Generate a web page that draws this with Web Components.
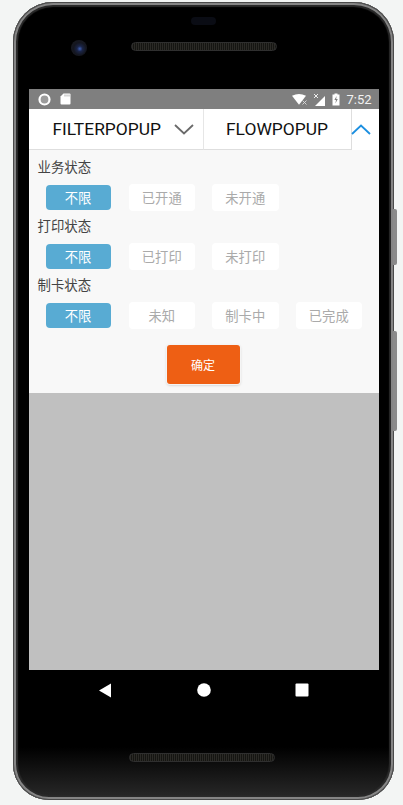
<!DOCTYPE html>
<html lang="zh">
<head>
<meta charset="utf-8">
<title>Popup demo</title>
<style>
  html, body { margin: 0; padding: 0; }
  body {
    width: 403px;
    height: 805px;
    overflow: hidden;
    background: #f3f5f4;
    font-family: Roboto, "Noto Sans CJK SC", sans-serif;
  }
</style>
</head>
<body>
<phone-frame>
  <status-bar></status-bar>
  <tab-bar></tab-bar>
  <filter-panel>
    <filter-group label="业务状态" options="已开通,未开通"></filter-group>
    <filter-group label="打印状态" options="已打印,未打印"></filter-group>
    <filter-group label="制卡状态" options="未知,制卡中,已完成"></filter-group>
    <confirm-button>确定</confirm-button>
  </filter-panel>
</phone-frame>

<script>
class PhoneFrame extends HTMLElement {
  constructor() {
    super();
    this.attachShadow({ mode: "open" });
  }

  connectedCallback() {
    this.shadowRoot.innerHTML = `
      <style>
        :host, * { box-sizing: border-box; }
        :host {
          display: block;
          position: relative;
          width: 381px;
          height: 798px;
          margin: 2px 0 0 13px;
        }
        .body {
          position: relative;
          width: 100%;
          height: 100%;
          padding-top: 87px;
          display: flex;
          flex-direction: column;
          align-items: center;
          background: linear-gradient(180deg, #000 0, #000 745px, #1c1c1c 780px, #2a2a2a 100%);
          border-radius: 40px 40px 36px 36px;
          box-shadow: inset 0 0 0 1px #4a4a4a, inset 0 0 0 3px #858585, inset 0 0 1px 5px #2a2a2a;
        }
        .screen {
          width: 350px;
          height: 581px;
          display: flex;
          flex-direction: column;
          background: #c0c0c0;
        }
        .nav {
          width: 350px;
          height: 40px;
          display: flex;
          align-items: center;
          justify-content: center;
        }
        .nav span { width: 98px; display: flex; justify-content: center; }
        .earpiece {
          position: absolute;
          left: 50%;
          top: 15px;
          width: 25px;
          height: 8px;
          margin-left: -12.5px;
          border-radius: 4px;
          background: #0a0c14;
        }
        .lens {
          position: absolute;
          left: 58px;
          top: 38px;
          width: 16px;
          height: 16px;
          border-radius: 50%;
          background: radial-gradient(circle at 55% 55%, #3f5fb5 0, #1b2547 22%, #14161f 50%, #1c1d22 100%);
        }
        .speaker {
          position: absolute;
          height: 9px;
          width: 146px;
          border-radius: 5px;
          background: repeating-linear-gradient(90deg, #2b2a26 0 1px, #151512 1px 2px);
          border: 1px solid #2f2f2f;
        }
        .speaker.top { left: 118px; top: 40px; }
        .speaker.bottom { left: 116px; top: 751px; }
        .key {
          position: absolute;
          right: -3px;
          width: 4px;
          background: #8a8a8a;
          border-radius: 0 2px 2px 0;
        }
        .key.power { top: 207px; height: 56px; }
        .key.volume { top: 329px; height: 100px; }
      </style>
      <div class="body">
        <div class="earpiece"></div>
        <div class="lens"></div>
        <div class="speaker top"></div>
        <div class="screen"><slot></slot></div>
        <div class="nav">
          <span><svg width="14" height="15" viewBox="0 0 14 15"><path d="M12 0.5V14.5L0 7.5Z" fill="#fff"/></svg></span>
          <span><svg width="14" height="14" viewBox="0 0 14 14"><circle cx="7" cy="7" r="6.8" fill="#fff"/></svg></span>
          <span><svg width="14" height="14" viewBox="0 0 14 14"><rect x="0.5" y="0.5" width="13" height="13" rx="1" fill="#fff"/></svg></span>
        </div>
        <div class="speaker bottom"></div>
        <div class="key power"></div>
        <div class="key volume"></div>
      </div>
    `;
  }
}

class StatusBar extends HTMLElement {
  constructor() {
    super();
    this.attachShadow({ mode: "open" });
  }

  connectedCallback() {
    this.shadowRoot.innerHTML = `
      <style>
        :host {
          display: flex;
          align-items: center;
          flex: none;
          height: 20px;
          padding: 0 7px 0 9px;
          background: #7f7f7f;
          color: #f2f2f2;
          font: 13px Roboto, sans-serif;
        }
        .left { display: flex; align-items: center; gap: 9px; margin-right: auto; }
        .right { display: flex; align-items: center; }
        svg { display: block; }
      </style>
      <div class="left">
        <svg width="13" height="13" viewBox="0 0 13 13"><circle cx="6.5" cy="6.5" r="5" fill="#9c9c9c" stroke="#fff" stroke-width="2.2"/></svg>
        <svg width="11" height="12" viewBox="0 0 11 12"><path d="M3.5 0.5H9.5Q10.5 0.5 10.5 1.5V10.5Q10.5 11.5 9.5 11.5H1.5Q0.5 11.5 0.5 10.5V3.5Z" fill="#fff"/><path d="M5 1.5V3.5M7 1.5V3.5M9 1.5V3.5" stroke="#999" stroke-width="0.8"/></svg>
      </div>
      <div class="right">
        <svg width="14" height="11" viewBox="0 0 14 11"><path d="M0 1.8Q7 -1.6 14 1.8L7 10.8Z" fill="#fff"/></svg>
        <svg width="5" height="5" viewBox="0 0 5 5" style="margin:6px 5px 0 -4px"><path d="M0.5 0.5L4.5 4.5M4.5 0.5L0.5 4.5" stroke="#ddd" stroke-width="0.9"/></svg>
        <svg width="14" height="13" viewBox="0 0 14 13" style="margin-right:6px"><path d="M13 3V13H3Z" fill="#fff"/><path d="M2 1L6 5M6 1L2 5" stroke="#eee" stroke-width="1"/></svg>
        <svg width="8" height="13" viewBox="0 0 8 13" style="margin-right:6px"><path d="M2.5 0.5H5.5V1.5H7.5V12.5H0.5V1.5H2.5Z" fill="#fff"/><path d="M4.6 3L2.4 7H4L3.4 10.4L5.8 6H4.2Z" fill="#7f7f7f"/></svg>
        <span>7:52</span>
      </div>
    `;
  }
}

class TabBar extends HTMLElement {
  constructor() {
    super();
    this.attachShadow({ mode: "open" });
  }

  connectedCallback() {
    this.shadowRoot.innerHTML = `
      <style>
        :host, * { box-sizing: border-box; }
        :host {
          display: flex;
          flex: none;
          height: 41px;
          background: #fff;
          color: #111;
          font: 400 17.4px Roboto, sans-serif;
        }
        .tab {
          display: flex;
          align-items: center;
          height: 41px;
          border-bottom: 1px solid #dedede;
        }
        .one {
          width: 175px;
          padding-left: 24px;
          border-right: 1px solid #e6e6e6;
        }
        .one svg { margin-left: 13px; }
        .two {
          width: 148px;
          justify-content: center;
          border-right: 1px solid #dedede;
        }
        .more {
          width: 27px;
          display: flex;
          align-items: center;
          height: 40px;
        }
        .more svg { margin-left: -1px; }
      </style>
      <div class="tab one">
        <span>FILTERPOPUP</span>
        <svg width="20" height="11" viewBox="0 0 20 11"><path d="M1 1L10 9.5L19 1" fill="none" stroke="#6a6a6a" stroke-width="1.8"/></svg>
      </div>
      <div class="tab two"><span>FLOWPOPUP</span></div>
      <div class="more">
        <svg width="20" height="11" viewBox="0 0 20 11"><path d="M1 10L10 1.5L19 10" fill="none" stroke="#1c8fe0" stroke-width="1.8"/></svg>
      </div>
    `;
  }
}

class FilterPanel extends HTMLElement {
  constructor() {
    super();
    this.attachShadow({ mode: "open" });
  }

  connectedCallback() {
    this.shadowRoot.innerHTML = `
      <style>
        :host {
          display: flex;
          flex-direction: column;
          flex: none;
          box-sizing: border-box;
          height: 243px;
          padding: 7px 0 0;
          background: #f8f8f8;
        }
      </style>
      <slot></slot>
    `;
  }
}

class FilterGroup extends HTMLElement {
  constructor() {
    super();
    this.attachShadow({ mode: "open" });
  }

  connectedCallback() {
    const options = this.getAttribute("options").split(",");
    const chips = options.map((name) => `<option-chip>${name}</option-chip>`).join("");
    this.shadowRoot.innerHTML = `
      <style>
        :host, * { box-sizing: border-box; }
        :host {
          display: block;
          height: 59px;
          padding-left: 9px;
        }
        .label {
          height: 19px;
          margin-bottom: 8px;
          color: #444;
          font: 13.4px/19px "Noto Sans CJK SC", sans-serif;
        }
        .row {
          display: flex;
          align-items: center;
          gap: 17px;
          padding-left: 8px;
        }
      </style>
      <div class="label">${this.getAttribute("label")}</div>
      <div class="row">
        <option-chip selected>不限</option-chip>
        ${chips}
      </div>
    `;
  }
}

class OptionChip extends HTMLElement {
  constructor() {
    super();
    this.attachShadow({ mode: "open" });
  }

  connectedCallback() {
    this.shadowRoot.innerHTML = `
      <style>
        :host {
          display: flex;
          align-items: center;
          justify-content: center;
          width: 66.5px;
          height: 27px;
          border-radius: 4px;
          background: #fff;
          color: #aaa;
          font: 13.3px "Noto Sans CJK SC", sans-serif;
        }
        :host([selected]) {
          width: 65px;
          height: 25px;
          margin-right: 1px;
          background: #58abd3;
          color: #fff;
        }
      </style>
      <slot></slot>
    `;
  }
}

class ConfirmButton extends HTMLElement {
  constructor() {
    super();
    this.attachShadow({ mode: "open" });
  }

  connectedCallback() {
    this.shadowRoot.innerHTML = `
      <style>
        :host {
          display: flex;
          align-items: center;
          justify-content: center;
          align-self: center;
          width: 73px;
          height: 39px;
          margin-top: 11px;
          margin-left: -1px;
          border-radius: 3px;
          background: #ee5f14;
          box-shadow: 0 0 0 1px #f4f4f4, 0 1px 3px rgba(0,0,0,0.25);
          color: #fff;
          font: 12px "Noto Sans CJK SC", sans-serif;
        }
      </style>
      <slot></slot>
    `;
  }
}

customElements.define("phone-frame", PhoneFrame);
customElements.define("status-bar", StatusBar);
customElements.define("tab-bar", TabBar);
customElements.define("filter-panel", FilterPanel);
customElements.define("filter-group", FilterGroup);
customElements.define("option-chip", OptionChip);
customElements.define("confirm-button", ConfirmButton);
</script>
</body>
</html>
